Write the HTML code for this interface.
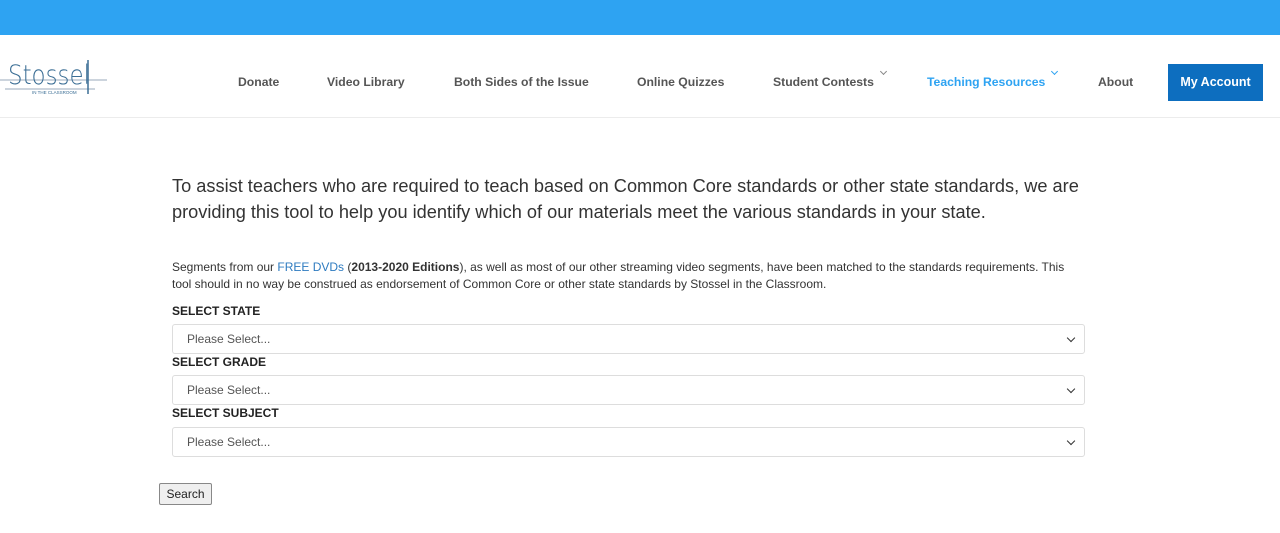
<!DOCTYPE html>
<html><head><style>
*{margin:0;padding:0;box-sizing:border-box}
body{width:1280px;height:533px;background:#fff;font-family:"Liberation Sans",sans-serif;color:#333;position:relative;overflow:hidden}
.top{height:35px;background:#2ea3f2}
.hdr{position:absolute;top:35px;left:0;width:1280px;height:83px;border-bottom:1px solid #ececec}
.nav a{position:absolute;top:40px;font-size:12.2px;font-weight:bold;color:#555;text-decoration:none}
.chev{position:absolute;top:34px;width:5px;height:5px;border-right:1.3px solid #888;border-bottom:1.3px solid #888;transform:rotate(45deg)}
.acct{position:absolute;left:1168px;top:29px;width:95px;height:37px;background:#0d6ebf;color:#fff;font-size:12.5px;font-weight:bold;text-align:center;line-height:37px}
.intro{position:absolute;left:172px;top:173px;font-size:18.2px;line-height:26px;color:#333;width:930px}
.seg{position:absolute;left:172px;top:259px;font-size:12px;line-height:17px;width:908px}
.lbl{position:absolute;left:172px;font-size:12px;font-weight:bold;color:#222}
.sel{position:absolute;left:172px;width:913px;height:30px;border:1px solid #ddd;border-radius:3px;font-size:12px;color:#555;padding-left:14px;line-height:28px}
.sel:after{content:"";position:absolute;right:10px;top:10px;width:5px;height:5px;border-right:1.5px solid #333;border-bottom:1.5px solid #333;transform:rotate(45deg)}
.btn{position:absolute;left:159px;top:483px;width:53px;height:22px;border:1px solid #888;background:#efefef;font-size:12px;text-align:center;line-height:20px;color:#222;border-radius:2px}
</style></head><body>
<div class="top"></div>
<div class="hdr">
<svg style="position:absolute;left:0;top:15px" width="110" height="50">
<line x1="0" y1="30" x2="107" y2="30" stroke="#9ab" stroke-width="1"/>
<line x1="5" y1="39" x2="95" y2="39" stroke="#9ab" stroke-width="1"/>
<text x="8" y="34" font-family="DejaVu Sans,sans-serif" font-size="27" fill="#3b6e95" textLength="82" lengthAdjust="spacingAndGlyphs" font-weight="200">Stossel</text>
<text x="32" y="44" font-size="4.5" fill="#3b6e95">IN THE CLASSROOM</text>
<line x1="88" y1="10" x2="88" y2="44" stroke="#3b6e95" stroke-width="1.5"/>
</svg>
<div class="nav">
<a style="left:238px">Donate</a>
<a style="left:327px">Video Library</a>
<a style="left:454px">Both Sides of the Issue</a>
<a style="left:637px">Online Quizzes</a>
<a style="left:773px">Student Contests</a><span class="chev" style="left:881px"></span>
<a style="left:927px;color:#2ea3f2">Teaching Resources</a><span class="chev" style="left:1052px;border-color:#2ea3f2"></span>
<a style="left:1098px">About</a>
</div>
<div class="acct">My Account</div>
</div>
<div class="intro">To assist teachers who are required to teach based on Common Core standards or other state standards, we are providing this tool to help you identify which of our materials meet the various standards in your state.</div>
<div class="seg">Segments from our <span style="color:#2e7bc0">FREE DVDs</span> (<b>2013-2020 Editions</b>), as well as most of our other streaming video segments, have been matched to the standards requirements. This tool should in no way be construed as endorsement of Common Core or other state standards by Stossel in the Classroom.</div>
<div class="lbl" style="top:304px">SELECT STATE</div>
<div class="sel" style="top:324px">Please Select...</div>
<div class="lbl" style="top:355px">SELECT GRADE</div>
<div class="sel" style="top:375px">Please Select...</div>
<div class="lbl" style="top:406px">SELECT SUBJECT</div>
<div class="sel" style="top:427px">Please Select...</div>
<div class="btn">Search</div>
</body></html>
